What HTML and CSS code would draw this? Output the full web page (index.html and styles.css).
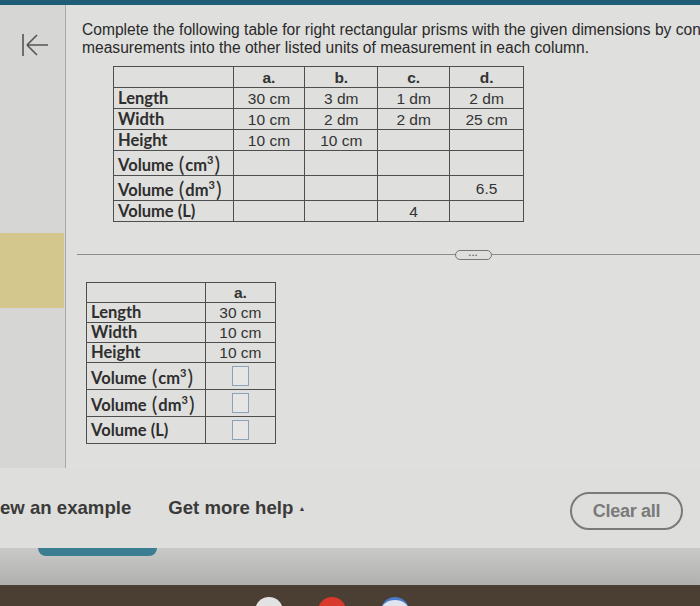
FILE: index.html
```html
<!DOCTYPE html>
<html lang="en">

<head>
    <meta charset="UTF-8">
    <meta name="viewport" content="width=device-width, initial-scale=1.0">
    <title>Prism volumes</title>
    <link rel="stylesheet" href="styles.css">
</head>

<body>
    <div class="topbar"></div>

    <div class="screen">
        <div class="sidebar">
            <svg class="back" width="30" height="26" viewBox="0 0 30 26">
                <path d="M3 2 V24 M7 13 H28 M7 13 L17 3 M7 13 L17 23" fill="none" stroke="#555" stroke-width="1.6" />
            </svg>
            <div class="marker"></div>
        </div>

        <div class="main">
            <p class="prompt">
                Complete the following table for right rectangular prisms with the given dimensions by converting the<br>
                measurements into the other listed units of measurement in each column.
            </p>

            <table class="grid given">
                <tr>
                    <th class="label"></th>
                    <th>a.</th>
                    <th>b.</th>
                    <th>c.</th>
                    <th>d.</th>
                </tr>
                <tr>
                    <td class="label">Length</td>
                    <td>30 cm</td>
                    <td>3 dm</td>
                    <td>1 dm</td>
                    <td>2 dm</td>
                </tr>
                <tr>
                    <td class="label">Width</td>
                    <td>10 cm</td>
                    <td>2 dm</td>
                    <td>2 dm</td>
                    <td>25 cm</td>
                </tr>
                <tr>
                    <td class="label">Height</td>
                    <td>10 cm</td>
                    <td>10 cm</td>
                    <td></td>
                    <td></td>
                </tr>
                <tr class="tall">
                    <td class="label">Volume <span class="paren">(</span>cm<sup>3</sup><span class="paren">)</span></td>
                    <td></td>
                    <td></td>
                    <td></td>
                    <td></td>
                </tr>
                <tr class="tall">
                    <td class="label">Volume <span class="paren">(</span>dm<sup>3</sup><span class="paren">)</span></td>
                    <td></td>
                    <td></td>
                    <td></td>
                    <td>6.5</td>
                </tr>
                <tr class="last">
                    <td class="label">Volume (L)</td>
                    <td></td>
                    <td></td>
                    <td>4</td>
                    <td></td>
                </tr>
            </table>

            <div class="divider">
                <span class="more">&bull;&bull;&bull;</span>
            </div>

            <table class="grid answer">
                <tr>
                    <th class="label"></th>
                    <th>a.</th>
                </tr>
                <tr>
                    <td class="label">Length</td>
                    <td>30 cm</td>
                </tr>
                <tr>
                    <td class="label">Width</td>
                    <td>10 cm</td>
                </tr>
                <tr>
                    <td class="label">Height</td>
                    <td>10 cm</td>
                </tr>
                <tr class="tall">
                    <td class="label">Volume <span class="paren">(</span>cm<sup>3</sup><span class="paren">)</span></td>
                    <td><input class="box" type="text"></td>
                </tr>
                <tr class="tall">
                    <td class="label">Volume <span class="paren">(</span>dm<sup>3</sup><span class="paren">)</span></td>
                    <td><input class="box" type="text"></td>
                </tr>
                <tr class="tall">
                    <td class="label">Volume (L)</td>
                    <td><input class="box" type="text"></td>
                </tr>
            </table>
        </div>
    </div>

    <div class="footer">
        <a class="link example">ew an example</a>
        <a class="link help">Get more help <span class="caret">&#9650;</span></a>
        <button class="clear">Clear all</button>
    </div>

    <div class="tray">
        <div class="tab"></div>
    </div>

    <div class="dock">
        <span class="dot white"></span>
        <span class="dot red"></span>
        <span class="dot blue"></span>
    </div>
</body>

</html>
```

FILE: styles.css
```css
body {
    margin: 0;
    width: 700px;
    height: 606px;
    overflow: hidden;
    font-family: "Liberation Sans", Arial, sans-serif;
    color: #2b2b2b;
    background: #dcdcda;
}

.topbar {
    height: 5px;
    background: #1f5d76;
}

.screen {
    display: flex;
    height: 463px;
}

.sidebar {
    width: 65px;
    flex-shrink: 0;
    background: #d6d6d4;
    border-right: 1px solid #a9a9a7;
    display: flex;
    flex-direction: column;
}

.back {
    margin: 27px 0 0 20px;
}

.marker {
    margin-top: 175px;
    height: 75px;
    width: 64px;
    background: #d4c78e;
}

.main {
    flex: 1;
    background: #dfdfdd;
    padding: 16px 0 0 16px;
    overflow: hidden;
}

.prompt {
    margin: 0;
    font-size: 15.6px;
    line-height: 18px;
    white-space: nowrap;
    color: #2a2a2a;
}

.grid {
    border-collapse: collapse;
    font-size: 15.5px;
    color: #333;
}

.grid th,
.grid td {
    border: 1.5px solid #4e4e4e;
    padding: 0 4px;
    text-align: center;
    height: 20px;
    line-height: 17px;
}

.grid th {
    font-weight: bold;
}

.grid .label {
    text-align: left;
    font-family: Lato, "Liberation Sans", sans-serif;
    font-weight: bold;
    font-size: 16.5px;
    color: #2e2e2e;
}

.grid .tall td {
    height: 24px;
}

.paren {
    font-size: 21px;
    line-height: 1;
    font-weight: normal;
    vertical-align: -1px;
    margin: 0 1px;
}

.grid sup {
    font-size: 11px;
    vertical-align: 7px;
    line-height: 0;
}

.given {
    margin: 9px 0 0 31px;
    width: 411px;
}

.given th:nth-child(1) { width: 112px; }
.given th:nth-child(2) { width: 64px; }
.given th:nth-child(3) { width: 65px; }
.given th:nth-child(4) { width: 64px; }
.given th:nth-child(5) { width: 66px; }

.given .last td {
    height: 20px;
}

.divider {
    margin: 32px 0 0 -5px;
    border-top: 1px solid #8c8c8a;
    position: relative;
    height: 0;
}

.more {
    position: absolute;
    left: 378px;
    top: -5px;
    width: 35px;
    height: 8px;
    border: 1px solid #777;
    border-radius: 5px;
    background: #dfdfdd;
    font-size: 6px;
    line-height: 8px;
    text-align: center;
    color: #666;
    letter-spacing: 1px;
}

.answer {
    margin: 27px 0 0 4px;
    width: 190px;
}

.answer th:nth-child(1) { width: 111px; }
.answer th:nth-child(2) { width: 62px; }

.answer th,
.answer td {
    height: 19px;
}

.answer .tall td {
    height: 26px;
}

.box {
    display: block;
    margin: 0 auto;
    width: 15px;
    height: 18px;
    padding: 0;
    border: 1.5px solid #8ea0bd;
    background: #e6e6e4;
}

.footer {
    height: 80px;
    background: #dededc;
    display: flex;
    align-items: center;
    box-sizing: border-box;
}

.link {
    font-size: 18.6px;
    font-weight: bold;
    color: #3a3a3a;
}

.example {
    margin-left: 0;
}

.help {
    margin-left: 37px;
}

.caret {
    font-size: 7px;
    vertical-align: 3px;
}

.clear {
    margin-left: auto;
    margin-right: 17px;
    margin-top: 6px;
    width: 113px;
    height: 38px;
    border: 2px solid #7a7a7a;
    border-radius: 19px;
    background: transparent;
    font-family: "Liberation Sans", Arial, sans-serif;
    font-size: 18px;
    font-weight: bold;
    color: #7a7a7a;
    letter-spacing: -0.3px;
}

.tray {
    height: 37px;
    background: linear-gradient(#c9c9c7, #b0b0ae);
}

.tab {
    margin-left: 38px;
    width: 119px;
    height: 8px;
    background: #3b7e91;
    border-radius: 0 0 9px 9px;
}

.dock {
    height: 21px;
    background: #4b3e33;
    display: flex;
    gap: 35px;
    padding-left: 255px;
    overflow: hidden;
}

.dot {
    margin-top: 12px;
    width: 28px;
    height: 28px;
    border-radius: 50%;
}

.white { background: #e2e2e2; }
.red { background: #d8392b; }
.blue { background: #dfe4ef; border-top: 3px solid #4a79c7; box-sizing: border-box; }
```
